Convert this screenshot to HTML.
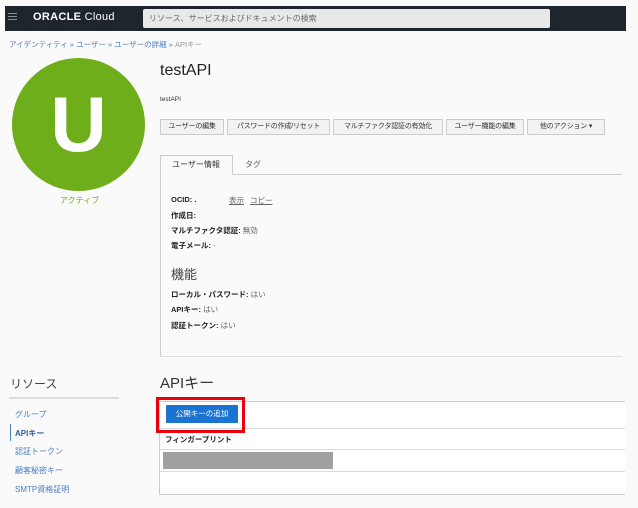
<!DOCTYPE html>
<html><head><meta charset="utf-8"><style>
*{margin:0;padding:0;box-sizing:border-box}
body{width:638px;height:508px;background:#fafafa;font-family:"Liberation Sans","Noto Sans CJK JP",sans-serif;position:relative;overflow:hidden;color:#333}
.a{position:absolute;white-space:nowrap}
.hdr{left:5px;top:6px;width:621px;height:25px;background:#1e252d}
.btn{position:absolute;top:119px;height:16px;border:1px solid #ccc;background:#f2f2f2;font-size:7px;line-height:14px;padding:0 3px;color:#333;white-space:nowrap;overflow:hidden;text-align:center;letter-spacing:-0.2px}
.lbl{font-size:7.5px;font-weight:bold;color:#222}
.v{font-weight:normal;color:#666}
.nav{font-size:8px;color:#4a7fc0}
</style></head><body>
<div class="a hdr"></div>
<div class="a" style="left:8px;top:13px;width:9px;height:1px;background:#8a9096;box-shadow:0 3px #8a9096,0 6px #8a9096"></div>
<div class="a" style="left:33px;top:11px;color:#fff;font-size:11px;font-weight:bold;letter-spacing:0.3px">ORACLE <span style="font-weight:normal">Cloud</span></div>
<div class="a" style="left:143px;top:9px;width:407px;height:19px;background:#e8e8e8;border-radius:2px;font-size:8px;color:#666;line-height:19px;padding-left:6px">リソース、サービスおよびドキュメントの検索</div>
<div class="a" style="left:9px;top:39px;font-size:7.5px;color:#4a7fc0">アイデンティティ » ユーザー » ユーザーの詳細 » <span style="color:#999">APIキー</span></div>
<div class="a" style="left:12px;top:58px;width:133px;height:133px;border-radius:50%;background:#6fae1b;color:#fff;font-size:78px;font-weight:bold;text-align:center;line-height:133px">U</div>
<div class="a" style="left:60px;top:195px;font-size:8px;color:#6fae1b">アクティブ</div>
<div class="a" style="left:160px;top:62px;font-size:16px;color:#222">testAPI</div>
<div class="a" style="left:160px;top:96px;font-size:6.5px;color:#333">testAPI</div>
<div class="btn" style="left:160px;width:64px">ユーザーの編集</div>
<div class="btn" style="left:227px;width:103px">パスワードの作成/リセット</div>
<div class="btn" style="left:333px;width:110px">マルチファクタ認証の有効化</div>
<div class="btn" style="left:446px;width:78px">ユーザー機能の編集</div>
<div class="btn" style="left:527px;width:78px">他のアクション ▾</div>
<div class="a" style="left:160px;top:174px;width:462px;height:1px;background:#ccc"></div>
<div class="a" style="left:160px;top:155px;width:73px;height:20px;border:1px solid #ccc;border-bottom:none;background:#fafafa;font-size:8px;line-height:18px;padding-left:11px">ユーザー情報</div>
<div class="a" style="left:245px;top:159px;font-size:8px;color:#666">タグ</div>
<div class="a" style="left:160px;top:175px;width:1px;height:181px;background:#ccc"></div>
<div class="a" style="left:160px;top:356px;width:462px;height:1px;background:#ddd"></div>
<div class="a lbl" style="left:171px;top:195px">OCID: .</div>
<div class="a" style="left:229px;top:195px;font-size:7.5px;color:#666;text-decoration:underline">表示</div>
<div class="a" style="left:250px;top:195px;font-size:7.5px;color:#666;text-decoration:underline">コピー</div>
<div class="a lbl" style="left:171px;top:210px">作成日:</div>
<div class="a lbl" style="left:171px;top:225px">マルチファクタ認証: <span class="v">無効</span></div>
<div class="a lbl" style="left:171px;top:240px">電子メール: <span class="v">-</span></div>
<div class="a" style="left:171px;top:264px;font-size:13px;color:#444">機能</div>
<div class="a lbl" style="left:171px;top:289px">ローカル・パスワード: <span class="v">はい</span></div>
<div class="a lbl" style="left:171px;top:304px">APIキー: <span class="v">はい</span></div>
<div class="a lbl" style="left:171px;top:320px">認証トークン: <span class="v">はい</span></div>
<div class="a" style="left:10px;top:375px;font-size:12px;color:#444">リソース</div>
<div class="a" style="left:9px;top:397px;width:110px;height:2px;background:#ddd"></div>
<div class="a nav" style="left:15px;top:409px">グループ</div>
<div class="a" style="left:10px;top:424px;width:1px;height:17px;background:#4a7fc0"></div>
<div class="a nav" style="left:15px;top:428px;color:#2a5fa0;font-weight:bold">APIキー</div>
<div class="a nav" style="left:15px;top:446px">認証トークン</div>
<div class="a nav" style="left:15px;top:465px">顧客秘密キー</div>
<div class="a nav" style="left:15px;top:484px">SMTP資格証明</div>
<div class="a" style="left:160px;top:372px;font-size:15px;color:#333">APIキー</div>
<div class="a" style="left:159px;top:401px;width:466px;height:94px;border:1px solid #ccc;border-right:none;background:#fff"></div>
<div class="a" style="left:160px;top:428px;width:465px;height:1px;background:#ddd"></div>
<div class="a" style="left:160px;top:449px;width:465px;height:1px;background:#ddd"></div>
<div class="a" style="left:160px;top:471px;width:465px;height:1px;background:#ddd"></div>
<div class="a" style="left:165px;top:434px;font-size:7.5px;font-weight:bold;color:#222">フィンガープリント</div>
<div class="a" style="left:163px;top:452px;width:170px;height:17px;background:#a0a0a0"></div>
<div class="a" style="left:156px;top:397px;width:89px;height:36px;border:3px solid #e8000b"></div>
<div class="a" style="left:166px;top:405px;width:72px;height:18px;background:#1a73d0;color:#fff;font-size:7.5px;line-height:18px;text-align:center;border-radius:1px">公開キーの追加</div>
</body></html>
